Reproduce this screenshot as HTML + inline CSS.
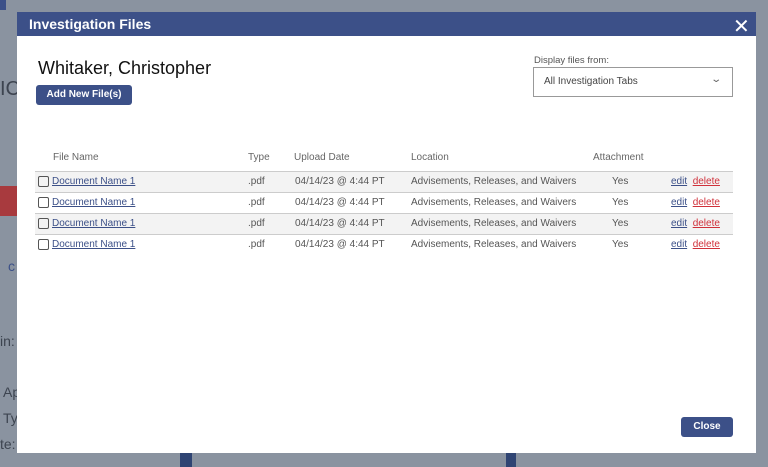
<!DOCTYPE html>
<html><head><style>
*{margin:0;padding:0;box-sizing:border-box}
body{width:768px;height:467px;background:#8a93a0;position:relative;overflow:hidden;font-family:"Liberation Sans",sans-serif;}
.a{position:absolute}
.bg{color:#3d4450;font-size:14px}
.modal{left:17px;top:12px;width:739px;height:441px;background:#fff}
.hdr{left:0;top:0;width:739px;height:24px;background:#3c5088;color:#fff;font-size:14px;font-weight:bold;padding:4px 12px}
.btn{background:#3c5088;color:#fff;font-size:10px;font-weight:bold;border-radius:3px;text-align:center}
.th{font-size:10px;color:#666;top:140px}
.row{left:18px;width:698px;height:21px;border-top:1px solid #ccc;font-size:10px;color:#555}
.row.g{background:#f3f3f3}
.row span{position:absolute;top:4px}
.row span.cb{left:3px;top:4px;width:11px;height:11px;border:1px solid #555;border-radius:2px}
a{text-decoration:underline}
.dn{color:#3c5088}
.del{color:#d0303a}
</style></head><body>
<div class="a" style="left:0;top:0;width:6px;height:10px;background:#3c5088"></div>
<div class="a" style="left:0;top:186px;width:17px;height:30px;background:#a83a3e"></div>
<div class="a bg" style="left:0;top:78px;font-size:20px">IC</div>
<div class="a bg" style="left:8px;top:258px;color:#3c5088">c</div>
<div class="a bg" style="left:0;top:333px">in:</div>
<div class="a bg" style="left:3px;top:384px">Ap</div>
<div class="a bg" style="left:3px;top:410px">Ty</div>
<div class="a bg" style="left:0;top:436px">te:</div>
<div class="a" style="left:180px;top:453px;width:12px;height:14px;background:#2f4473"></div>
<div class="a" style="left:506px;top:453px;width:10px;height:14px;background:#2f4473"></div>
<div class="a modal">
 <div class="a hdr">Investigation Files</div>
 <div class="a" style="left:716px;top:2px;color:#fff;font-size:20px">✕</div>
 <div class="a" style="left:21px;top:46px;font-size:18px;color:#111">Whitaker, Christopher</div>
 <div class="a btn" style="left:19px;top:73px;width:96px;height:20px;line-height:20px">Add New File(s)</div>
 <div class="a" style="left:517px;top:43px;font-size:9.5px;color:#555">Display files from:</div>
 <div class="a" style="left:516px;top:55px;width:200px;height:30px;border:1px solid #999;font-size:10px;color:#444;padding:8px 10px">All Investigation Tabs<span style="position:absolute;right:12px;top:6px;font-size:10px;color:#666;transform:scaleX(1.4)">⌄</span></div>
 <div class="a th" style="left:36px">File Name</div>
 <div class="a th" style="left:231px">Type</div>
 <div class="a th" style="left:277px">Upload Date</div>
 <div class="a th" style="left:394px">Location</div>
 <div class="a th" style="left:576px">Attachment</div>
 <div class="a row g" style="top:159px"><span class="cb"></span><span style="left:17px"><a class="dn">Document Name 1</a></span><span style="left:213px">.pdf</span><span style="left:260px">04/14/23 @ 4:44 PT</span><span style="left:376px">Advisements, Releases, and Waivers</span><span style="left:577px">Yes</span><span style="left:636px"><a class="dn">edit</a>&nbsp; <a class="del">delete</a></span></div>
 <div class="a row" style="top:180px"><span class="cb"></span><span style="left:17px"><a class="dn">Document Name 1</a></span><span style="left:213px">.pdf</span><span style="left:260px">04/14/23 @ 4:44 PT</span><span style="left:376px">Advisements, Releases, and Waivers</span><span style="left:577px">Yes</span><span style="left:636px"><a class="dn">edit</a>&nbsp; <a class="del">delete</a></span></div>
 <div class="a row g" style="top:201px"><span class="cb"></span><span style="left:17px"><a class="dn">Document Name 1</a></span><span style="left:213px">.pdf</span><span style="left:260px">04/14/23 @ 4:44 PT</span><span style="left:376px">Advisements, Releases, and Waivers</span><span style="left:577px">Yes</span><span style="left:636px"><a class="dn">edit</a>&nbsp; <a class="del">delete</a></span></div>
 <div class="a row" style="top:222px"><span class="cb"></span><span style="left:17px"><a class="dn">Document Name 1</a></span><span style="left:213px">.pdf</span><span style="left:260px">04/14/23 @ 4:44 PT</span><span style="left:376px">Advisements, Releases, and Waivers</span><span style="left:577px">Yes</span><span style="left:636px"><a class="dn">edit</a>&nbsp; <a class="del">delete</a></span></div>
 <div class="a btn" style="left:664px;top:405px;width:52px;height:20px;line-height:20px">Close</div>
</div>
</body></html>
